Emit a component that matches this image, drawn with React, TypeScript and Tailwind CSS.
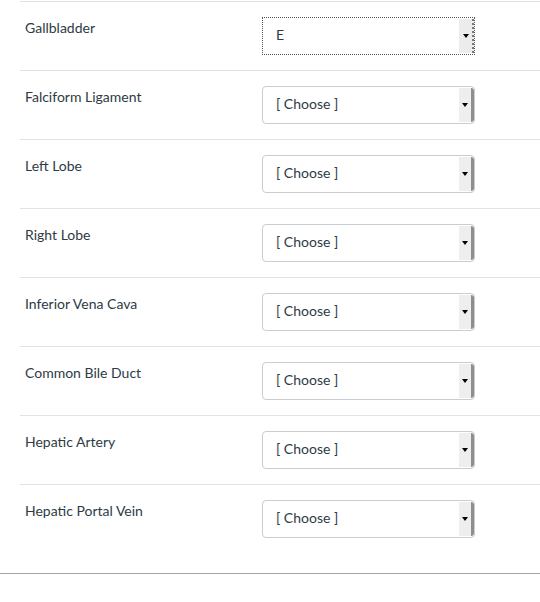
import React from "react";

const rows = [
  { label: "Gallbladder", value: "E", focused: true },
  { label: "Falciform Ligament", value: "[ Choose ]" },
  { label: "Left Lobe", value: "[ Choose ]" },
  { label: "Right Lobe", value: "[ Choose ]" },
  { label: "Inferior Vena Cava", value: "[ Choose ]" },
  { label: "Common Bile Duct", value: "[ Choose ]" },
  { label: "Hepatic Artery", value: "[ Choose ]" },
  { label: "Hepatic Portal Vein", value: "[ Choose ]" },
];

function Arrow() {
  return (
    <svg width="6" height="4" viewBox="0 0 6 4">
      <polygon points="0,0 6,0 3,4" fill="#000" />
    </svg>
  );
}

function Select({ value, focused }: { value: string; focused?: boolean }) {
  if (focused) {
    return (
      <div className="w-[213px] h-[38px] border border-dotted border-[#555] flex items-stretch bg-white">
        <div className="flex-1 flex items-center pl-[13px] pb-[3px] text-[14px] text-[#2d3b45]">{value}</div>
        <div className="w-[15px] my-[1px] bg-[#ececec] border-r-2 border-dotted border-r-[#777] flex items-center justify-center">
          <Arrow />
        </div>
      </div>
    );
  }
  return (
    <div className="w-[213px] h-[38px] border border-[#c7cdd1] rounded-[4px] flex items-stretch bg-white">
      <div className="flex-1 flex items-center pl-[13px] pb-[3px] text-[14px] text-[#2d3b45]">{value}</div>
      <div className="w-[15px] my-[1px] bg-[#eeeeee] border-r-[3px] border-r-[#8e8e8e] rounded-r-[3px] flex items-center justify-center">
        <Arrow />
      </div>
    </div>
  );
}

export default function App() {
  return (
    <div className="w-[540px] h-[602px] bg-white pt-px" style={{ fontFamily: "Lato, 'Noto Sans', sans-serif" }}>
      <div className="ml-[20px]">
        {rows.map((r) => (
          <div key={r.label} className="border-t border-[#e3e3e3] pt-[15px] pb-[15px] flex items-start">
            <div className="w-[242px] pl-[5px] pt-[1px] text-[14px] leading-[20px] text-[#2d3b45]">{r.label}</div>
            <Select value={r.value} focused={r.focused} />
          </div>
        ))}
      </div>
      <div className="mt-[20px] border-t border-[#a5a5a5]" />
    </div>
  );
}
